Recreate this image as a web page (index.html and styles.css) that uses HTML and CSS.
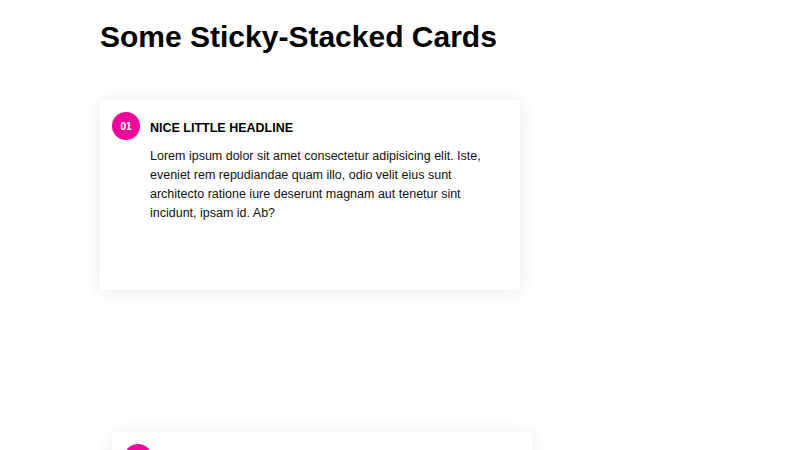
FILE: index.html
```html
<!DOCTYPE html>
<html lang="en">
<head>
    <meta charset="UTF-8">
    <meta name="viewport" content="width=device-width, initial-scale=1.0">
    <title>Some Sticky-Stacked Cards</title>
    <link rel="stylesheet" href="styles.css">
</head>
<body>
    <main class="page">
        <h1>Some Sticky-Stacked Cards</h1>

        <div class="stack">
            <div class="card">
                <span class="num">01</span>
                <div class="card-body">
                    <h2>Nice little headline</h2>
                    <p>Lorem ipsum dolor sit amet consectetur adipisicing elit. Iste, eveniet rem repudiandae quam illo, odio velit eius sunt architecto ratione iure deserunt magnam aut tenetur sint incidunt, ipsam id. Ab?</p>
                </div>
            </div>
            <div class="card card-2">
                <span class="num">02</span>
                <div class="card-body">
                    <h2>Nice little headline</h2>
                    <p>Lorem ipsum dolor sit amet consectetur adipisicing elit. Iste, eveniet rem repudiandae quam illo, odio velit eius sunt architecto ratione iure deserunt magnam aut tenetur sint incidunt, ipsam id. Ab?</p>
                </div>
            </div>
        </div>
    </main>
</body>
</html>
```

FILE: styles.css
```css
body {
    margin: 0;
    font-family: "Liberation Sans", Arial, sans-serif;
    color: #111;
    background: #fff;
}
.page {
    padding: 18px 100px 0;
}
h1 {
    margin: 0;
    font-size: 30px;
    line-height: 38px;
    color: #000;
}
.stack {
    margin-top: 44px;
}
.card {
    display: flex;
    gap: 10px;
    width: 420px;
    min-height: 190px;
    box-sizing: border-box;
    padding: 12px;
    margin-bottom: 142px;
    background: #fff;
    box-shadow: 0 2px 18px rgba(0,0,0,0.09);
}
.card-2 { margin-left: 12px; }
.num {
    flex: none;
    width: 28px;
    height: 28px;
    border-radius: 50%;
    background: #f0079b;
    color: #fff;
    font-size: 10px;
    font-weight: bold;
    display: flex;
    align-items: center;
    justify-content: center;
}
.card-body h2 {
    margin: 9px 0 12px;
    font-size: 12.5px;
    text-transform: uppercase;
    color: #000;
}
.card-body p {
    margin: 0;
    font-size: 12.5px;
    line-height: 19px;
}
```
